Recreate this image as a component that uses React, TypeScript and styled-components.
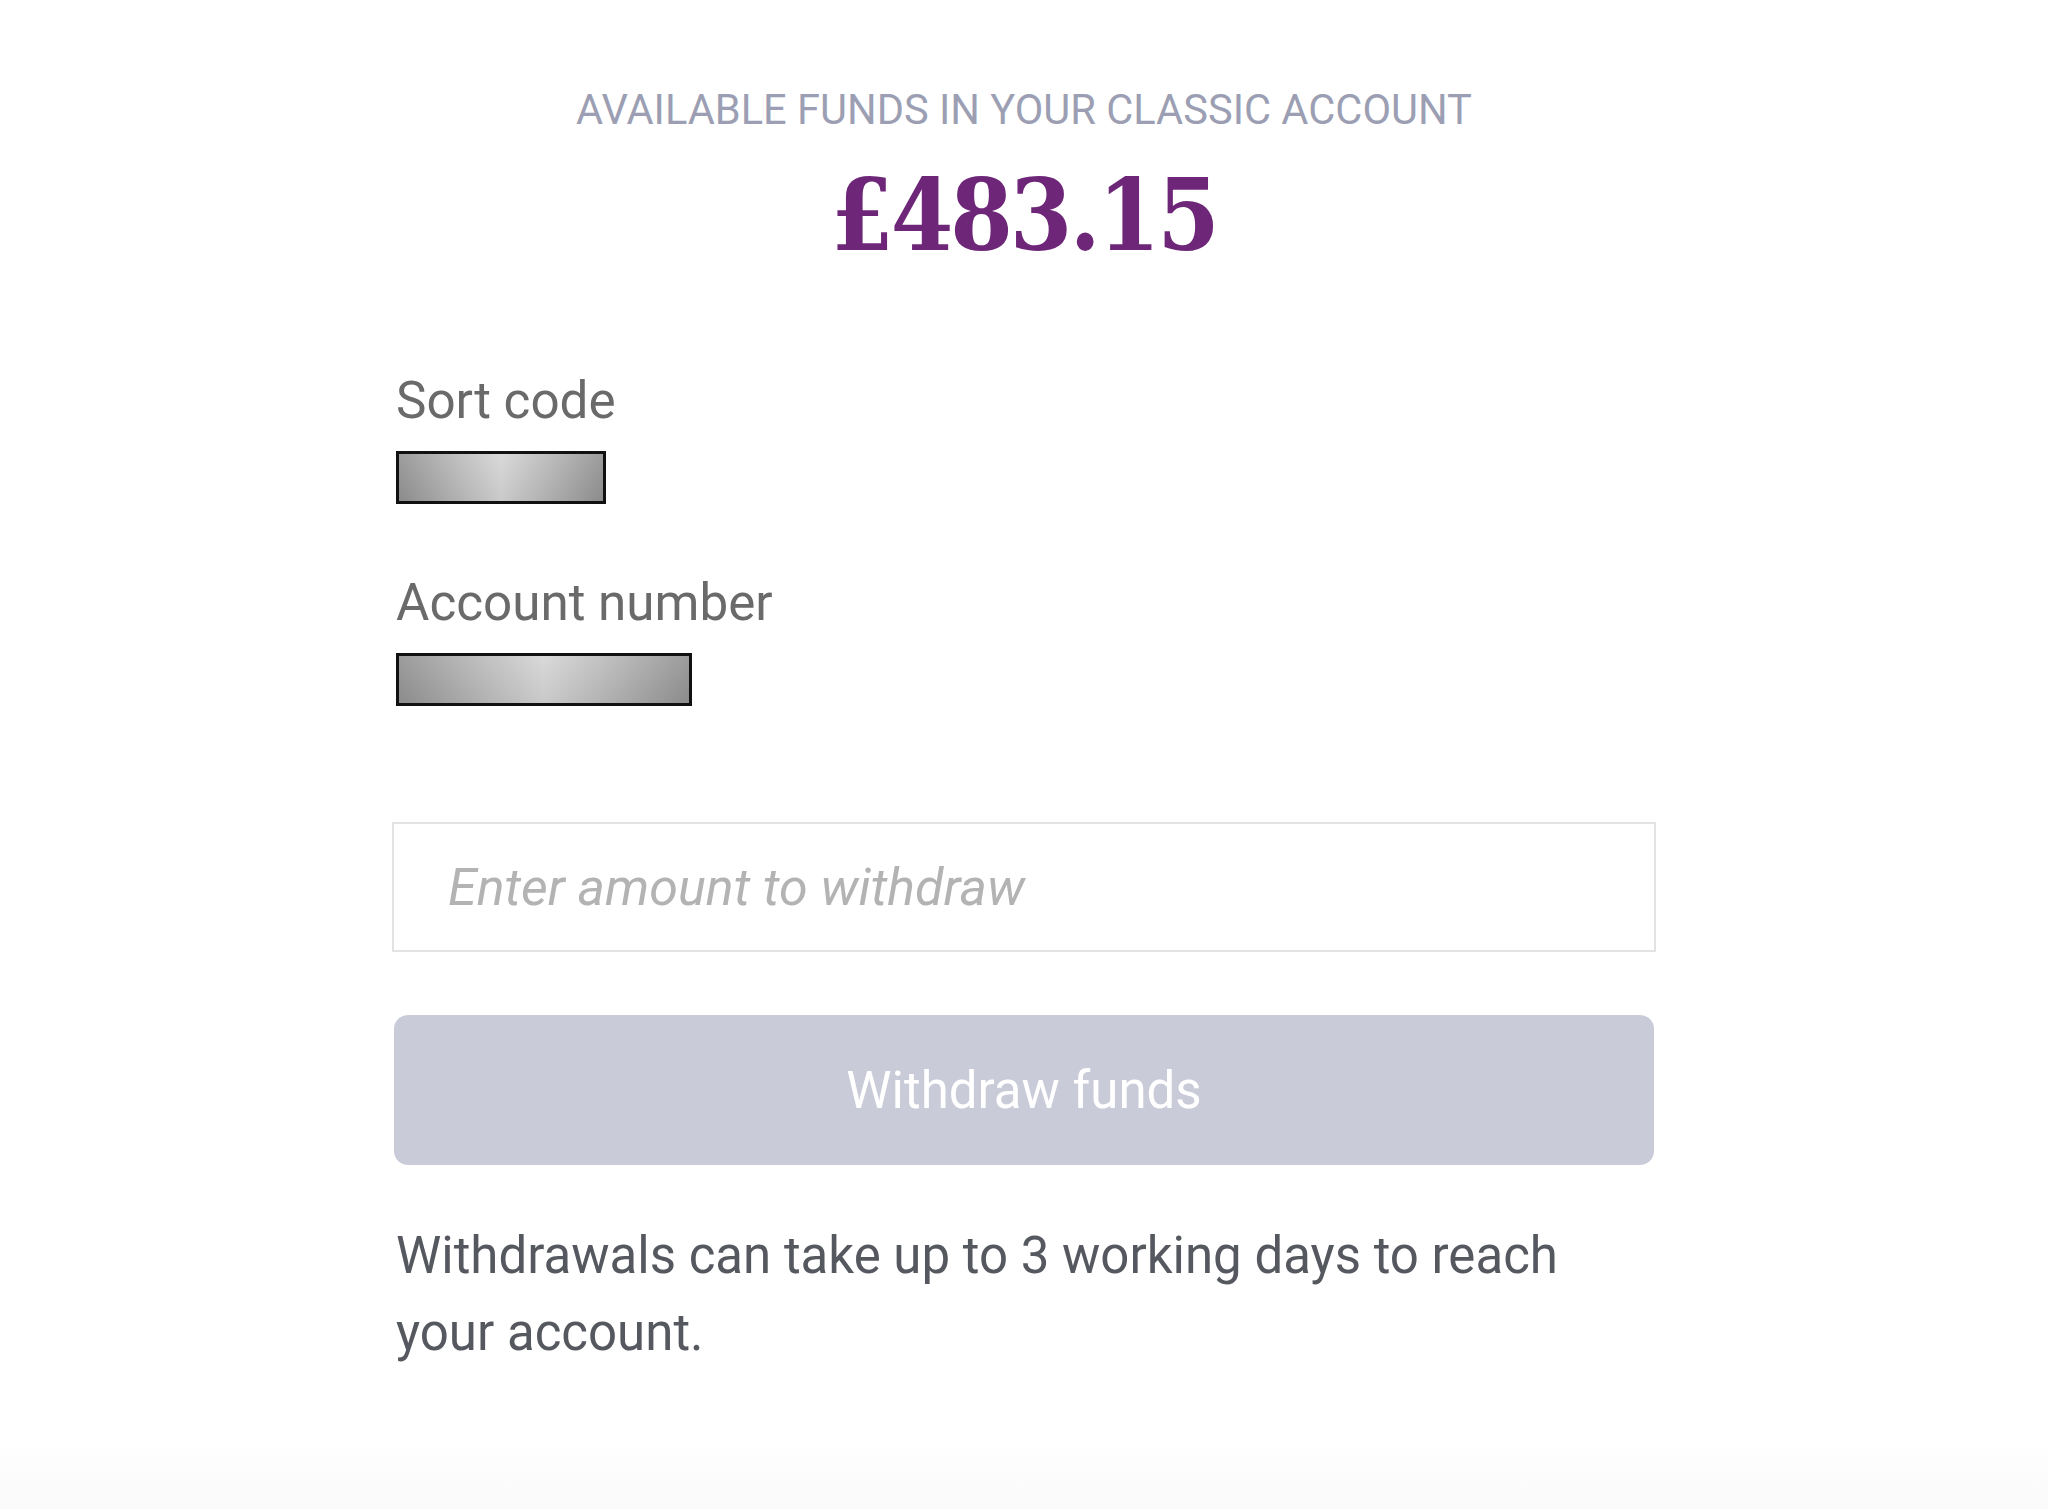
import React from 'react'
import styled, { createGlobalStyle } from 'styled-components'

const GlobalStyle = createGlobalStyle`
  html, body {
    margin: 0;
    padding: 0;
    background: #ffffff;
    font-family: Roboto, "Liberation Sans", sans-serif;
  }
`

const Page = styled.main`
  min-height: 1509px;
  display: flex;
  justify-content: center;
  background: linear-gradient(to bottom, #ffffff 0, #ffffff 1440px, #fafafa 1509px);
`

const Panel = styled.div`
  width: 1264px;
  padding-top: 85px;
  display: flex;
  flex-direction: column;
`

const Header = styled.header`
  text-align: center;
`

const Eyebrow = styled.p`
  margin: 0;
  font-size: 41.6px;
  color: #9c9fb3;
  text-transform: uppercase;
`

const Amount = styled.h1`
  margin: 31px 0 0;
  font-family: "DejaVu Serif Condensed", "DejaVu Serif", serif;
  font-stretch: condensed;
  font-weight: 700;
  font-size: 100px;
  line-height: 100px;
  color: #6e2778;
  letter-spacing: -3px;
`

const Details = styled.section`
  margin-top: 105px;
  display: flex;
  flex-direction: column;
`

const Field = styled.div`
  display: flex;
  flex-direction: column;
  align-items: flex-start;
  & + & {
    margin-top: 68px;
  }
`

const Label = styled.span`
  margin: 0 0 20px 4px;
  font-size: 51.2px;
  color: #6a6a6a;
`

const Redacted = styled.div<{ $width: number }>`
  box-sizing: border-box;
  width: ${p => p.$width}px;
  height: 53px;
  margin-left: 4px;
  border: 3px solid #111;
  background:
    linear-gradient(to bottom, rgba(255, 255, 255, 0.08), rgba(0, 0, 0, 0.06)),
    linear-gradient(to right, #949494 0%, #bdbdbd 30%, #d6d6d6 50%, #bdbdbd 70%, #949494 100%);
`

const AmountInput = styled.input`
  box-sizing: border-box;
  margin-top: 116px;
  width: 100%;
  height: 130px;
  border: 2px solid #e3e3e3;
  padding: 0 54px;
  font-family: Roboto, "Liberation Sans", sans-serif;
  font-size: 52px;
  outline: none;
  &::placeholder {
    color: #b3b3b3;
    font-style: italic;
    font-weight: 400;
  }
`

const WithdrawButton = styled.button`
  margin: 63px 2px 0;
  height: 150px;
  border: none;
  border-radius: 14px;
  background: #cacbd9;
  color: #ffffff;
  font-family: Roboto, "Liberation Sans", sans-serif;
  font-size: 51px;
  font-weight: 400;
`

const Note = styled.p`
  margin: 52px 0 0 4px;
  max-width: 1210px;
  font-size: 51px;
  line-height: 77px;
  color: #55585e;
`

const App = () => {
  return (
    <>
      <GlobalStyle />
      <Page>
        <Panel>
          <Header>
            <Eyebrow>Available funds in your Classic account</Eyebrow>
            <Amount>£483.15</Amount>
          </Header>
          <Details>
            <Field>
              <Label>Sort code</Label>
              <Redacted $width={210} />
            </Field>
            <Field>
              <Label>Account number</Label>
              <Redacted $width={296} />
            </Field>
          </Details>
          <AmountInput type="text" placeholder="Enter amount to withdraw" />
          <WithdrawButton disabled>Withdraw funds</WithdrawButton>
          <Note>Withdrawals can take up to 3 working days to reach your account.</Note>
        </Panel>
      </Page>
    </>
  )
}

export default App
